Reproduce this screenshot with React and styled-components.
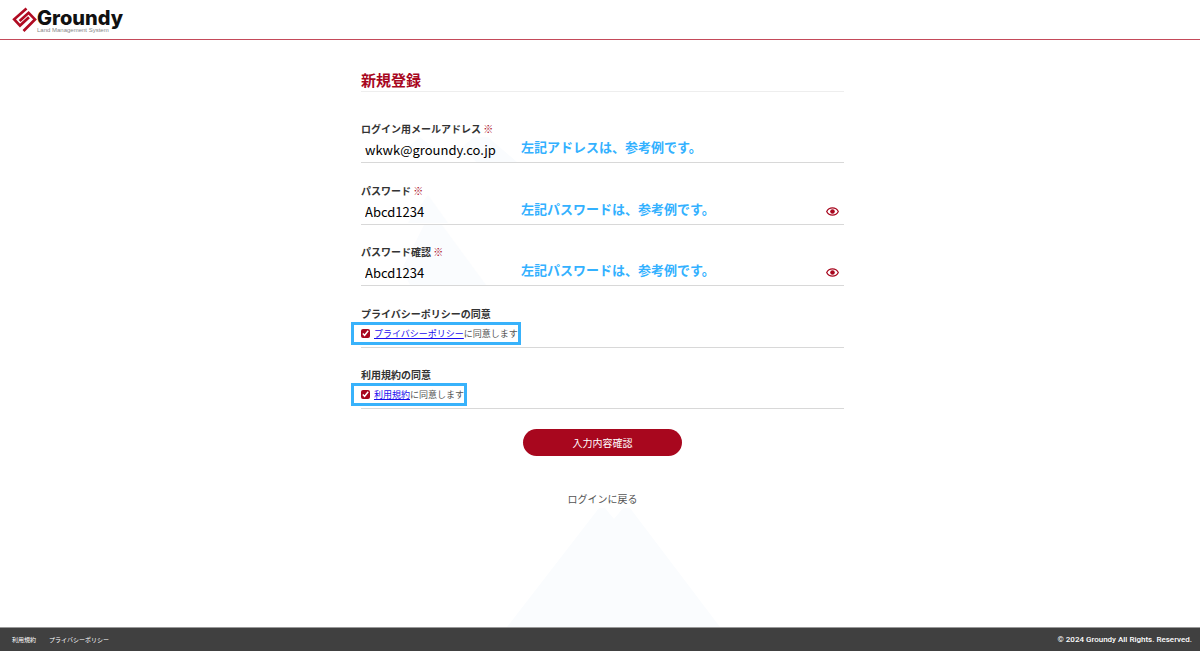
import { useState } from "react";
import styled, { createGlobalStyle } from "styled-components";

export default function App() {
    const [form, setForm] = useState({
        email: 'wkwk@groundy.co.jp',
        password: 'Abcd1234',
        confirmPassword: 'Abcd1234',
    });
    const [visible, setVisible] = useState({ password: true, confirmPassword: true });
    const [privacy, setPrivacy] = useState(true);
    const [terms, setTerms] = useState(true);

    function change(e) {
        setForm({ ...form, [e.target.name]: e.target.value });
    }

    function toggle(name) {
        setVisible({ ...visible, [name]: !visible[name] });
    }

    return (
        <Page>
            <GlobalStyle />
            <Header>
                <LogoMark />
                <LogoText>
                    <LogoName>Groundy</LogoName>
                    <LogoSub>Land Management System</LogoSub>
                </LogoText>
            </Header>
            <Main>
                <Mountains />
                <Form onSubmit={(e) => e.preventDefault()}>
                    <Title>新規登録</Title>
                    <Field>
                        <Label htmlFor="email">ログイン用メールアドレス <Required>※</Required></Label>
                        <InputRow>
                            <Input id="email" type="text" name="email" value={form.email} onChange={change} />
                            <Note>左記アドレスは、参考例です。</Note>
                        </InputRow>
                    </Field>
                    <Field>
                        <Label htmlFor="password">パスワード <Required>※</Required></Label>
                        <InputRow>
                            <Input id="password" type={visible.password ? 'text' : 'password'} name="password" value={form.password} onChange={change} />
                            <Note>左記パスワードは、参考例です。</Note>
                            <EyeButton type="button" aria-label="パスワードを表示" onClick={() => toggle('password')}><Eye /></EyeButton>
                        </InputRow>
                    </Field>
                    <Field>
                        <Label htmlFor="confirmPassword">パスワード確認 <Required>※</Required></Label>
                        <InputRow>
                            <Input id="confirmPassword" type={visible.confirmPassword ? 'text' : 'password'} name="confirmPassword" value={form.confirmPassword} onChange={change} />
                            <Note>左記パスワードは、参考例です。</Note>
                            <EyeButton type="button" aria-label="パスワード確認を表示" onClick={() => toggle('confirmPassword')}><Eye /></EyeButton>
                        </InputRow>
                    </Field>
                    <Field>
                        <Label as="h2">プライバシーポリシーの同意</Label>
                        <Consent>
                            <Checkbox id="privacy" checked={privacy} onChange={(e) => setPrivacy(e.target.checked)} />
                            <label htmlFor="privacy"><ConsentLink href="#privacy">プライバシーポリシー</ConsentLink>に同意します</label>
                        </Consent>
                    </Field>
                    <Field>
                        <Label as="h2">利用規約の同意</Label>
                        <Consent>
                            <Checkbox id="terms" checked={terms} onChange={(e) => setTerms(e.target.checked)} />
                            <label htmlFor="terms"><ConsentLink href="#terms">利用規約</ConsentLink>に同意します</label>
                        </Consent>
                    </Field>
                    <Actions>
                        <SubmitButton>入力内容確認</SubmitButton>
                        <BackLink href="#login">ログインに戻る</BackLink>
                    </Actions>
                </Form>
            </Main>
            <Footer>
                <FooterNav>
                    <FooterLink href="#terms">利用規約</FooterLink>
                    <FooterLink href="#privacy">プライバシーポリシー</FooterLink>
                </FooterNav>
                <Copyright>© 2024 Groundy All Rights. Reserved.</Copyright>
            </Footer>
        </Page>
    )
}

function LogoMark() {
    return (
        <svg width="25" height="26" viewBox="0 0 25 26" fill="none" stroke="#b00b22" strokeWidth="2.7" aria-hidden="true">
            <path d="M14.5 1.5 L2.2 12.3 L8 18.6 L17 10.2" />
            <path d="M7.6 14 L16.6 5.8 L23 12.4 L11.5 24" />
        </svg>
    )
}

function Eye() {
    return (
        <svg width="13" height="9" viewBox="0 0 13 9" aria-hidden="true">
            <path d="M0.7 4.5 C3 -0.4 10 -0.4 12.3 4.5 C10 9.4 3 9.4 0.7 4.5 Z" fill="#fff" stroke="#a8071e" strokeWidth="1.2" />
            <circle cx="6.5" cy="4.5" r="2.3" fill="#a8071e" />
        </svg>
    )
}

function Mountains() {
    return (
        <MountainSvg viewBox="0 0 360 490" aria-hidden="true">
            <path d="M54 10 L66 0 L78 10 Z" />
            <path d="M108 10 L120 0 H134 L163 25 H122 Z" />
            <path d="M74 58 L94 86 H54 Z" />
            <path d="M70 88 H88 L132 148 H56 L48 132 Z" />
            <path d="M153 490 L245 371 H251 L260 382 L269 371 H276 L366 490 Z" />
        </MountainSvg>
    )
}

const GlobalStyle = createGlobalStyle`
    * {
        box-sizing: border-box;
    }
    body {
        margin: 0;
        background: #fff;
        color: #444;
        font-family: "Noto Sans CJK JP", sans-serif;
    }
    button, input {
        font-family: inherit;
    }
`;

const Page = styled.div`
    min-height: 100vh;
    display: flex;
    flex-direction: column;
`;

const Header = styled.header`
    height: 40px;
    padding: 0 12px;
    display: flex;
    align-items: center;
    border-bottom: 1px solid #c44a5a;
`;

const LogoText = styled.div`
    display: flex;
    flex-direction: column;
    padding-top: 2px;
`;

const LogoName = styled.span`
    color: #111;
    font: 800 20px/18px Inter, sans-serif;
`;

const LogoSub = styled.span`
    color: #888;
    font: 6px/6px "Liberation Sans", sans-serif;
`;

const Main = styled.main`
    position: relative;
    flex: 1;
    display: flex;
    justify-content: center;
    padding: 28px 16px 32px 21px;
`;

/* faint scenery behind the form */
const MountainSvg = styled.svg`
    position: absolute;
    bottom: 0;
    left: 50%;
    width: 360px;
    height: 490px;
    margin-left: -246px;
    fill: #fafcfe;
    overflow: visible;
`;

const Form = styled.form`
    position: relative;
    width: 100%;
    max-width: 483px;
`;

const Title = styled.h1`
    margin: 0 0 27px;
    color: #a8071e;
    font-size: 15px;
    line-height: 23px;
    border-bottom: 1px solid #eee;
`;

const Field = styled.div`
    height: 44px;
    margin-bottom: 17px;
    border-bottom: 1px solid #d8d8d8;

    &:nth-of-type(odd) {
        margin-bottom: 18px;
    }
`;

const Label = styled.label`
    display: block;
    margin: 0;
    color: #333;
    font-size: 10px;
    font-weight: 700;
    line-height: 20px;
`;

const Required = styled.span`
    color: #a8071e;
`;

const InputRow = styled.div`
    display: flex;
    align-items: center;
    height: 20px;
    padding: 0 5px 0 4px;
`;

const Input = styled.input`
    width: 156px;
    height: 20px;
    padding: 0;
    border: 0;
    outline: 0;
    background: transparent;
    color: #000;
    font-size: 13px;
`;

const Note = styled.span`
    flex: 1;
    padding-bottom: 5px;
    color: #33b1ff;
    font-size: 13px;
    font-weight: 700;
    line-height: 16px;
`;

const EyeButton = styled.button`
    display: flex;
    padding: 0;
    border: 0;
    background: none;
    cursor: pointer;
`;

const Consent = styled.div`
    display: flex;
    align-items: center;
    gap: 4px;
    width: fit-content;
    height: 23px;
    margin: -2px 0 0 -10px;
    padding: 0 0 0 7px;
    border: 3px solid #38b2fb;
    color: #555;
    font-size: 9px;
    line-height: 17px;
`;

const Checkbox = styled.input.attrs({ type: 'checkbox' })`
    width: 9px;
    height: 9px;
    margin: 0;
    accent-color: #a8071e;
`;

const ConsentLink = styled.a`
    color: #1a0dee;
`;

const Actions = styled.div`
    display: flex;
    flex-direction: column;
    align-items: center;
    gap: 34px;
    padding-top: 2px;
`;

const SubmitButton = styled.button`
    width: 159px;
    height: 27px;
    padding: 0;
    border: 0;
    border-radius: 14px;
    background: #a8071e;
    color: #fff;
    font-size: 10px;
    cursor: pointer;
`;

const BackLink = styled.a`
    color: #555;
    font-size: 10px;
    line-height: 18px;
    text-decoration: none;
`;

const Footer = styled.footer`
    display: flex;
    align-items: center;
    justify-content: space-between;
    height: 24px;
    padding: 0 8px 0 12px;
    border-top: 1px solid #999;
    background: #404040;
    color: #fff;
`;

const FooterNav = styled.nav`
    display: flex;
    align-items: center;
    gap: 13px;
`;

const FooterLink = styled.a`
    color: #fff;
    font-size: 6px;
    line-height: 12px;
    text-decoration: none;
`;

const Copyright = styled.small`
    font: 500 8px/12px Roboto, sans-serif;
`;
